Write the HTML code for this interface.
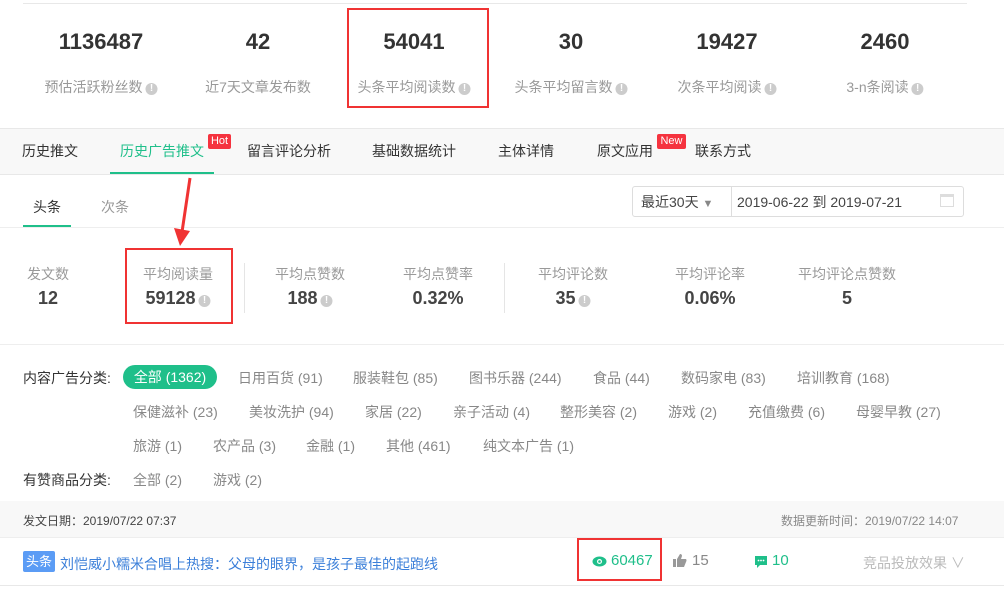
<!DOCTYPE html>
<html><head><meta charset="utf-8"><style>
*{margin:0;padding:0;box-sizing:border-box}
body{width:1004px;height:598px;background:#fff;position:relative;overflow:hidden;font-family:"Liberation Sans","Noto Sans CJK SC",sans-serif;color:#333}
.a{position:absolute;white-space:nowrap}
.big{font-size:22px;font-weight:bold;color:#333;transform:translateX(-50%);top:29px}
.lb{font-size:14px;color:#999;transform:translateX(-50%);top:77px}
.i{display:inline-block;width:12px;height:12px;border-radius:50%;background:#ccc;color:#fff;font-size:10px;line-height:12px;text-align:center;font-weight:bold;vertical-align:1px;margin-left:3px}
.tab{font-size:14px;color:#333;top:141px}
.sl{font-size:14px;color:#999;transform:translateX(-50%);top:264px}
.sv{font-size:18px;font-weight:bold;color:#444;transform:translateX(-50%);top:288px}
.c{font-size:14px;color:#888}
.red{position:absolute;border:2px solid #f03333}
</style></head><body>
<div class="a" style="left:23px;top:3px;width:944px;height:1px;background:#e8e8e8"></div>
<div class="a big" style="left:101px">1136487</div>
<div class="a big" style="left:258px">42</div>
<div class="a big" style="left:414px">54041</div>
<div class="a big" style="left:571px">30</div>
<div class="a big" style="left:727px">19427</div>
<div class="a big" style="left:885px">2460</div>
<div class="a lb" style="left:101px">预估活跃粉丝数<span class="i">!</span></div>
<div class="a lb" style="left:258px">近7天文章发布数</div>
<div class="a lb" style="left:414px">头条平均阅读数<span class="i">!</span></div>
<div class="a lb" style="left:571px">头条平均留言数<span class="i">!</span></div>
<div class="a lb" style="left:727px">次条平均阅读<span class="i">!</span></div>
<div class="a lb" style="left:885px">3-n条阅读<span class="i">!</span></div>
<div class="red" style="left:347px;top:8px;width:142px;height:100px"></div>

<div class="a" style="left:0;top:128px;width:1004px;height:47px;background:#f8f8f8;border-top:1px solid #e8e8e8;border-bottom:1px solid #e8e8e8"></div>
<div class="a tab" style="left:22px">历史推文</div>
<div class="a tab" style="left:120px;color:#1fbf8a">历史广告推文</div>
<div class="a" style="left:110px;top:172px;width:104px;height:2px;background:#1fbf8a"></div>
<div class="a" style="left:208px;top:134px;width:23px;height:15px;background:#f5333f;border-radius:2px;color:#fff;font-size:11px;line-height:15px;text-align:center">Hot</div>
<div class="a tab" style="left:247px">留言评论分析</div>
<div class="a tab" style="left:372px">基础数据统计</div>
<div class="a tab" style="left:498px">主体详情</div>
<div class="a tab" style="left:597px">原文应用</div>
<div class="a" style="left:657px;top:134px;width:29px;height:15px;background:#f5333f;border-radius:2px;color:#fff;font-size:11px;line-height:15px;text-align:center">New</div>
<div class="a tab" style="left:695px">联系方式</div>

<div class="a" style="left:33px;top:197px;font-size:14px;color:#333">头条</div>
<div class="a" style="left:101px;top:197px;font-size:14px;color:#999">次条</div>
<div class="a" style="left:23px;top:225px;width:48px;height:2px;background:#1fbf8a"></div>
<div class="a" style="left:0;top:227px;width:1004px;height:1px;background:#eee"></div>
<div class="a" style="left:632px;top:186px;width:332px;height:31px;border:1px solid #ddd;border-radius:3px"></div>
<div class="a" style="left:731px;top:186px;width:1px;height:31px;background:#ddd"></div>
<div class="a" style="left:641px;top:192px;font-size:14px;color:#444">最近30天 <span style="color:#888;font-size:11px">▼</span></div>
<div class="a" style="left:737px;top:192px;font-size:14px;color:#444">2019-06-22 到 2019-07-21</div>
<div class="a" style="left:940px;top:194px;width:14px;height:13px;border:1px solid #ddd;border-top:3px solid #ddd"></div>

<svg class="a" style="left:170px;top:176px" width="30" height="74"><path d="M20 2 L12 56" stroke="#f03333" stroke-width="3"/><path d="M4 52 L10 70 L20 55 Z" fill="#f03333"/></svg>

<div class="a sl" style="left:48px">发文数</div>
<div class="a sl" style="left:178px">平均阅读量</div>
<div class="a sl" style="left:310px">平均点赞数</div>
<div class="a sl" style="left:438px">平均点赞率</div>
<div class="a sl" style="left:573px">平均评论数</div>
<div class="a sl" style="left:710px">平均评论率</div>
<div class="a sl" style="left:847px">平均评论点赞数</div>
<div class="a sv" style="left:48px">12</div>
<div class="a sv" style="left:178px">59128<span class="i">!</span></div>
<div class="a sv" style="left:310px">188<span class="i">!</span></div>
<div class="a sv" style="left:438px">0.32%</div>
<div class="a sv" style="left:573px">35<span class="i">!</span></div>
<div class="a sv" style="left:710px">0.06%</div>
<div class="a sv" style="left:847px">5</div>
<div class="a" style="left:244px;top:263px;width:1px;height:50px;background:#e5e5e5"></div>
<div class="a" style="left:504px;top:263px;width:1px;height:50px;background:#e5e5e5"></div>
<div class="red" style="left:125px;top:248px;width:108px;height:76px"></div>
<div class="a" style="left:0;top:344px;width:1004px;height:1px;background:#eee"></div>

<div class="a c" style="left:23px;top:368px;color:#333">内容广告分类:</div>
<div class="a" style="left:123px;top:365px;width:94px;height:24px;border-radius:12px;background:#1fbf8a;color:#fff;font-size:14px;line-height:24px;text-align:center">全部 (1362)</div>
<div class="a c" style="left:238px;top:368px">日用百货 (91)</div>
<div class="a c" style="left:353px;top:368px">服装鞋包 (85)</div>
<div class="a c" style="left:469px;top:368px">图书乐器 (244)</div>
<div class="a c" style="left:593px;top:368px">食品 (44)</div>
<div class="a c" style="left:681px;top:368px">数码家电 (83)</div>
<div class="a c" style="left:797px;top:368px">培训教育 (168)</div>
<div class="a c" style="left:133px;top:402px">保健滋补 (23)</div>
<div class="a c" style="left:249px;top:402px">美妆洗护 (94)</div>
<div class="a c" style="left:365px;top:402px">家居 (22)</div>
<div class="a c" style="left:453px;top:402px">亲子活动 (4)</div>
<div class="a c" style="left:560px;top:402px">整形美容 (2)</div>
<div class="a c" style="left:668px;top:402px">游戏 (2)</div>
<div class="a c" style="left:748px;top:402px">充值缴费 (6)</div>
<div class="a c" style="left:856px;top:402px">母婴早教 (27)</div>
<div class="a c" style="left:133px;top:436px">旅游 (1)</div>
<div class="a c" style="left:213px;top:436px">农产品 (3)</div>
<div class="a c" style="left:306px;top:436px">金融 (1)</div>
<div class="a c" style="left:386px;top:436px">其他 (461)</div>
<div class="a c" style="left:483px;top:436px">纯文本广告 (1)</div>
<div class="a c" style="left:23px;top:470px;color:#333">有赞商品分类:</div>
<div class="a c" style="left:133px;top:470px">全部 (2)</div>
<div class="a c" style="left:213px;top:470px">游戏 (2)</div>

<div class="a" style="left:0;top:501px;width:1004px;height:37px;background:#f8f8f8;border-bottom:1px solid #eee"></div>
<div class="a" style="left:23px;top:512px;font-size:12px;color:#444">发文日期：2019/07/22 07:37</div>
<div class="a" style="left:781px;top:512px;font-size:12px;color:#888">数据更新时间：2019/07/22 14:07</div>
<div class="a" style="left:23px;top:551px;width:32px;height:21px;background:#5b9cf5;color:#fff;font-size:13px;line-height:21px;text-align:center;border-radius:2px">头条</div>
<div class="a" style="left:60px;top:554px;font-size:14px;color:#3b7fd9">刘恺威小糯米合唱上热搜：父母的眼界，是孩子最佳的起跑线</div>
<svg class="a" style="left:592px;top:556px" width="15" height="11"><ellipse cx="7.5" cy="5.5" rx="7" ry="5" fill="#1fbf8a"/><circle cx="7.5" cy="5.5" r="2.5" fill="#fff"/><circle cx="7.5" cy="5.5" r="1.3" fill="#1fbf8a"/></svg>
<div class="a" style="left:611px;top:552px;font-size:15px;color:#1fbf8a">60467</div>
<svg class="a" style="left:673px;top:553px" width="14" height="14"><rect x="0" y="6" width="3" height="8" fill="#999"/><path d="M4 6 L7 1 Q9 1 9 3 L8 6 L13 6 Q14 7 13 9 L11 14 L4 14 Z" fill="#999"/></svg>
<div class="a" style="left:692px;top:552px;font-size:15px;color:#888">15</div>
<svg class="a" style="left:754px;top:555px" width="14" height="14"><path d="M1 1 H13 V10 H6 L3 13 V10 H1 Z" fill="#1fbf8a"/><circle cx="4.5" cy="5.5" r="0.9" fill="#fff"/><circle cx="7" cy="5.5" r="0.9" fill="#fff"/><circle cx="9.5" cy="5.5" r="0.9" fill="#fff"/></svg>
<div class="a" style="left:772px;top:552px;font-size:15px;color:#1fbf8a">10</div>
<div class="a" style="left:863px;top:553px;font-size:14px;color:#bbb">竞品投放效果 ∨</div>
<div class="red" style="left:577px;top:538px;width:85px;height:43px"></div>
<div class="a" style="left:0;top:585px;width:1004px;height:1px;background:#e8e8e8"></div>
</body></html>
